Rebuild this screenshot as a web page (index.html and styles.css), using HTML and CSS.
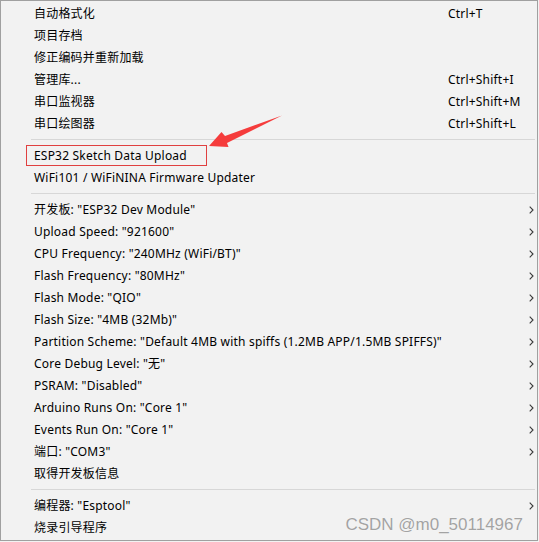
FILE: index.html
```html
<!DOCTYPE html>
<html lang="zh-CN">
<head>
<meta charset="utf-8">
<title>Tools menu</title>
<link rel="stylesheet" href="styles.css">
</head>
<body>
<div class="menu">
  <div class="item"><span class="label">自动格式化</span><span class="key">Ctrl+T</span><span></span></div>
  <div class="item"><span class="label">项目存档</span><span class="key"></span><span></span></div>
  <div class="item"><span class="label">修正编码并重新加载</span><span class="key"></span><span></span></div>
  <div class="item"><span class="label">管理库...</span><span class="key">Ctrl+Shift+I</span><span></span></div>
  <div class="item"><span class="label">串口监视器</span><span class="key">Ctrl+Shift+M</span><span></span></div>
  <div class="item"><span class="label">串口绘图器</span><span class="key">Ctrl+Shift+L</span><span></span></div>
  <div class="sep"></div>
  <div class="item"><span class="label">ESP32 Sketch Data Upload</span><span class="key"></span><span></span></div>
  <div class="item"><span class="label">WiFi101 / WiFiNINA Firmware Updater</span><span class="key"></span><span></span></div>
  <div class="sep"></div>
  <div class="item sub"><span class="label">开发板: "ESP32 Dev Module"</span><span class="key"></span><svg class="chev" viewBox="0 0 5 8" width="5" height="8"><polyline points="0.7,0.7 4,4 0.7,7.3"/></svg></div>
  <div class="item sub"><span class="label">Upload Speed: "921600"</span><span class="key"></span><svg class="chev" viewBox="0 0 5 8" width="5" height="8"><polyline points="0.7,0.7 4,4 0.7,7.3"/></svg></div>
  <div class="item sub"><span class="label">CPU Frequency: "240MHz (WiFi/BT)"</span><span class="key"></span><svg class="chev" viewBox="0 0 5 8" width="5" height="8"><polyline points="0.7,0.7 4,4 0.7,7.3"/></svg></div>
  <div class="item sub"><span class="label">Flash Frequency: "80MHz"</span><span class="key"></span><svg class="chev" viewBox="0 0 5 8" width="5" height="8"><polyline points="0.7,0.7 4,4 0.7,7.3"/></svg></div>
  <div class="item sub"><span class="label">Flash Mode: "QIO"</span><span class="key"></span><svg class="chev" viewBox="0 0 5 8" width="5" height="8"><polyline points="0.7,0.7 4,4 0.7,7.3"/></svg></div>
  <div class="item sub"><span class="label">Flash Size: "4MB (32Mb)"</span><span class="key"></span><svg class="chev" viewBox="0 0 5 8" width="5" height="8"><polyline points="0.7,0.7 4,4 0.7,7.3"/></svg></div>
  <div class="item sub"><span class="label">Partition Scheme: "Default 4MB with spiffs (1.2MB APP/1.5MB SPIFFS)"</span><span class="key"></span><svg class="chev" viewBox="0 0 5 8" width="5" height="8"><polyline points="0.7,0.7 4,4 0.7,7.3"/></svg></div>
  <div class="item sub"><span class="label">Core Debug Level: "无"</span><span class="key"></span><svg class="chev" viewBox="0 0 5 8" width="5" height="8"><polyline points="0.7,0.7 4,4 0.7,7.3"/></svg></div>
  <div class="item sub"><span class="label">PSRAM: "Disabled"</span><span class="key"></span><svg class="chev" viewBox="0 0 5 8" width="5" height="8"><polyline points="0.7,0.7 4,4 0.7,7.3"/></svg></div>
  <div class="item sub"><span class="label">Arduino Runs On: "Core 1"</span><span class="key"></span><svg class="chev" viewBox="0 0 5 8" width="5" height="8"><polyline points="0.7,0.7 4,4 0.7,7.3"/></svg></div>
  <div class="item sub"><span class="label">Events Run On: "Core 1"</span><span class="key"></span><svg class="chev" viewBox="0 0 5 8" width="5" height="8"><polyline points="0.7,0.7 4,4 0.7,7.3"/></svg></div>
  <div class="item sub"><span class="label">端口: "COM3"</span><span class="key"></span><svg class="chev" viewBox="0 0 5 8" width="5" height="8"><polyline points="0.7,0.7 4,4 0.7,7.3"/></svg></div>
  <div class="item"><span class="label">取得开发板信息</span><span class="key"></span><span></span></div>
  <div class="sep"></div>
  <div class="item sub"><span class="label">编程器: "Esptool"</span><span class="key"></span><svg class="chev" viewBox="0 0 5 8" width="5" height="8"><polyline points="0.7,0.7 4,4 0.7,7.3"/></svg></div>
  <div class="item"><span class="label">烧录引导程序</span><span class="key"></span><span></span></div>

  <div class="highlight-box"></div>
  <svg class="callout-arrow" viewBox="0 0 80 40" width="80" height="40">
    <polygon points="4,35 16.5,21 20,25 77,4.5 22,32 23.5,36"/>
  </svg>
  <div class="watermark">CSDN @m0_50114967</div>
</div>
</body>
</html>
```

FILE: styles.css
```css
html, body {
  margin: 0;
  padding: 0;
  background: #f2f2f2;
}

.menu {
  position: relative;
  box-sizing: border-box;
  width: 538px;
  height: 541px;
  overflow: hidden;
  background: #f2f2f2;
  border: 1px solid #a0a0a0;
  padding-top: 2px;
  font-family: "Noto Sans", "Noto Sans CJK SC", sans-serif;
  font-size: 12px;
  letter-spacing: 0.2px;
  color: #000;
}

.item {
  display: grid;
  grid-template-columns: 414px 1fr 14px;
  align-items: center;
  height: 22px;
  line-height: 22px;
  padding-left: 33px;
  white-space: nowrap;
}

.key {
  overflow: hidden;
}

.chev {
  display: block;
  fill: none;
  stroke: #3a3a3a;
  stroke-width: 1.1;
  margin-left: 6px;
}

.sep {
  height: 10px;
  box-sizing: border-box;
  padding-top: 4px;
  margin-left: 30px;
  margin-right: 2px;
}

.sep::before {
  content: "";
  display: block;
  height: 1px;
  background: #d7d7d7;
}

.highlight-box {
  position: absolute;
  left: 25px;
  top: 144px;
  width: 181px;
  height: 21px;
  box-sizing: border-box;
  border: 1px solid #e04040;
}

.callout-arrow {
  position: absolute;
  left: 204px;
  top: 110px;
  fill: #f53c3c;
}

.watermark {
  position: absolute;
  right: 14px;
  top: 515px;
  font-family: "Liberation Sans", Arial, sans-serif;
  font-size: 17px;
  line-height: 17px;
  letter-spacing: 0;
  color: #a3a3a3;
  text-shadow: 0 0 1px #ffffff;
  white-space: nowrap;
}
```
